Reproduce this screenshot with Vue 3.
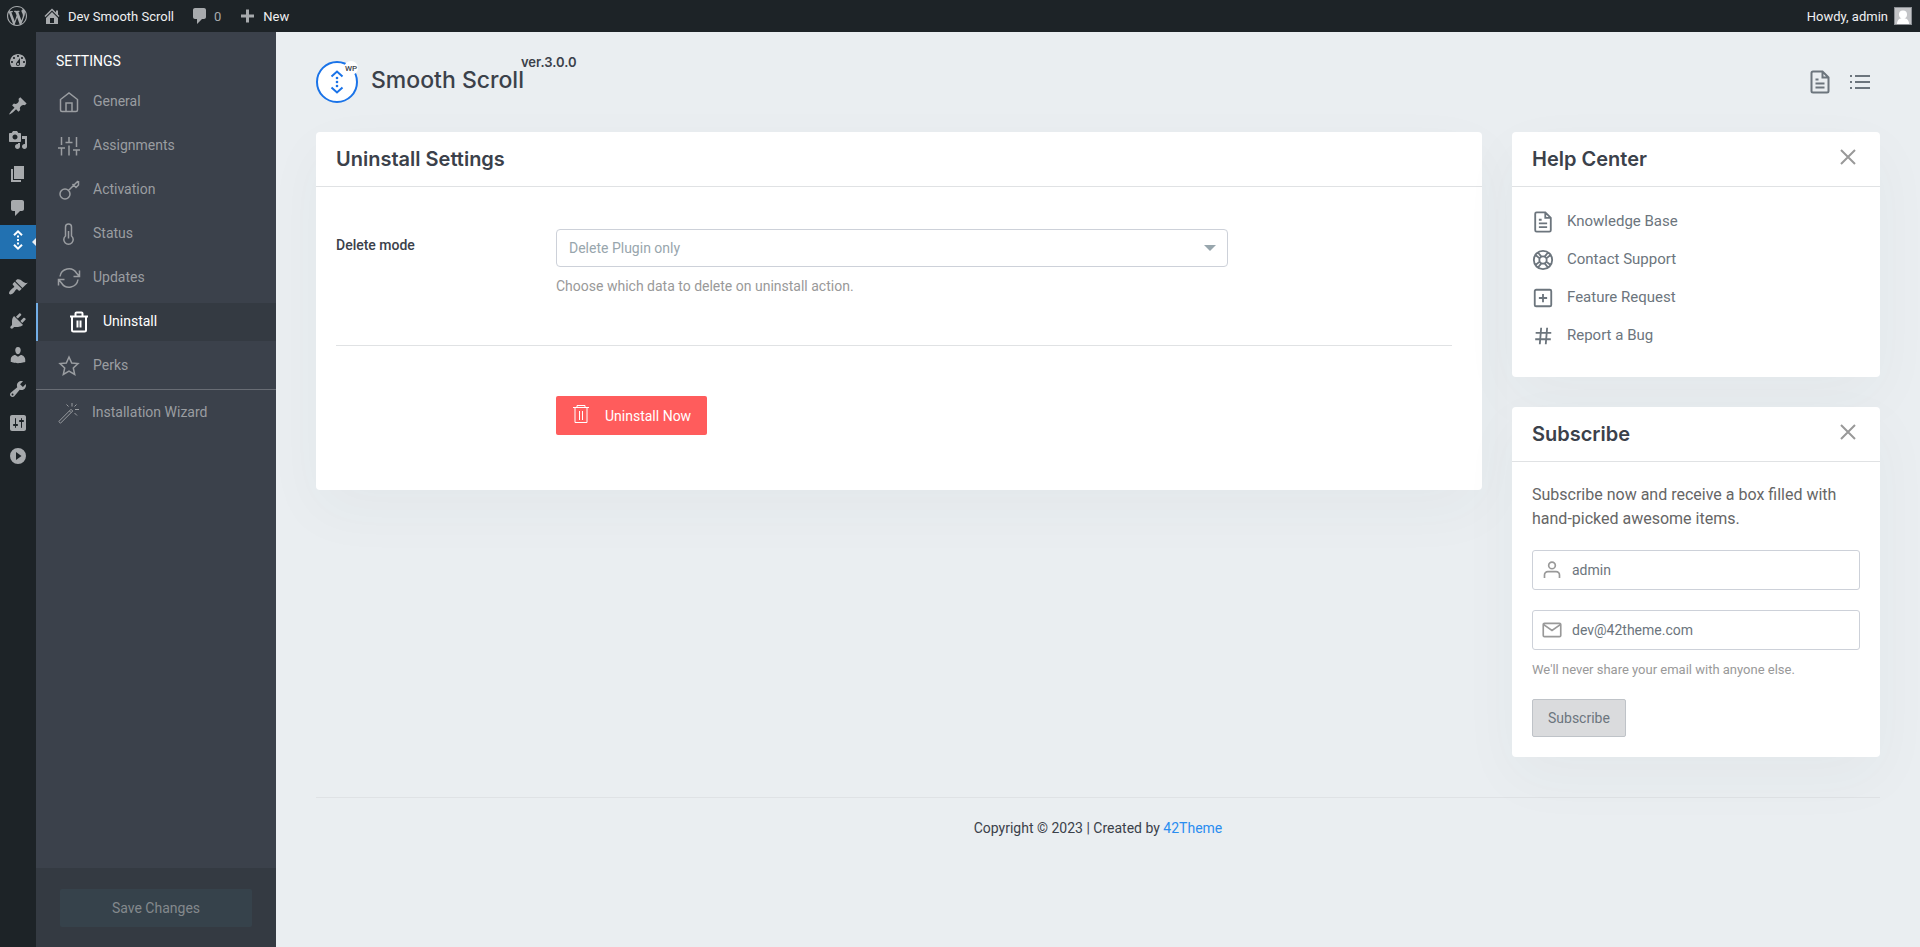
<!--
  Smooth Scroll plugin settings page
  Admin bar, WP menu, settings tabs, uninstall form, help and subscribe boxes
-->
<template>
  <div class="admin">
    <!-- Admin bar -->
    <header class="admin-bar">
      <a href="#" class="bar-item bar-logo" aria-label="About WordPress">
        <svg viewBox="0 0 20 20" width="20" height="20"><path :d="dash.wordpress" /></svg>
      </a>
      <a href="#" class="bar-item bar-site">
        <svg viewBox="0 0 20 20" width="20" height="20"><path :d="dash.home" /></svg>
        <span>Dev Smooth Scroll</span>
      </a>
      <a href="#" class="bar-item bar-comments">
        <svg viewBox="0 0 20 20" width="20" height="20"><path :d="dash.comments" /></svg>
        <span>0</span>
      </a>
      <a href="#" class="bar-item bar-new">
        <svg viewBox="0 0 20 20" width="20" height="20"><path :d="dash.plus" /></svg>
        <span>New</span>
      </a>
      <a href="#" class="bar-item bar-user">
        <span>Howdy, admin</span>
        <svg class="avatar" viewBox="0 0 18 18" width="18" height="18">
          <rect x="0.5" y="0.5" width="17" height="17" fill="#c3c4c7" stroke="#8c8f94" />
          <circle cx="9" cy="7.5" r="4" fill="#fff" />
          <path d="M3 17c0-4 2.500-6 6-6s6 2 6 6z" fill="#fff" />
        </svg>
      </a>
    </header>

    <div class="admin-body">
      <!-- WP menu -->
      <nav class="wp-menu" aria-label="Main menu">
        <a
          v-for="item in wpMenu"
          :key="item.icon"
          href="#"
          class="wp-item"
          :class="{ current: item.current, spaced: item.spaced }"
          :aria-label="item.label"
        >
          <svg viewBox="0 0 20 20" width="20" height="20"><path :d="dash[item.icon]" fill-rule="evenodd" /></svg>
        </a>
      </nav>

      <!-- Settings tabs -->
      <aside class="tabs">
        <h2 class="tabs-title">SETTINGS</h2>
        <ul class="tab-list">
          <li v-for="item in tabs" :key="item.id">
            <a href="#" class="tab" :class="{ active: tab === item.id }" @click.prevent="tab = item.id">
              <svg class="line-icon" viewBox="0 0 24 24" width="24" height="24"><path :d="line[item.id]" /></svg>
              <span>{{ item.name }}</span>
            </a>
          </li>
        </ul>
        <a href="#" class="tab wizard">
          <svg class="line-icon" viewBox="0 0 24 24" width="24" height="24"><path :d="line.wizard" /></svg>
          <span>Installation Wizard</span>
        </a>
        <div class="save-box">
          <button type="button" class="btn-save">Save Changes</button>
        </div>
      </aside>

      <!-- Content -->
      <main class="content">
        <div class="page-head">
          <svg class="logo" viewBox="0 0 42 42" width="42" height="42">
            <circle cx="21" cy="21" r="20" fill="#fff" stroke="#1a73e8" stroke-width="2" />
            <path d="M15.500 15.500l5.500-5 5.500 5M15.500 26.500l5.500 5 5.500-5" fill="none" stroke="#1a73e8" stroke-width="2" />
            <circle cx="21" cy="17" r="1.300" fill="#1a73e8" />
            <circle cx="21" cy="21" r="1.300" fill="#1a73e8" />
            <circle cx="21" cy="25" r="1.300" fill="#1a73e8" />
            <circle cx="35" cy="7" r="7" fill="#fff" />
            <text x="35" y="10" class="logo-text">WP</text>
          </svg>
          <h1 class="page-title">Smooth Scroll<sup>ver.3.0.0</sup></h1>
          <div class="head-links">
            <a href="#" aria-label="Documentation">
              <svg class="line-icon" viewBox="0 0 24 24" width="24" height="24"><path :d="line.doc" /></svg>
            </a>
            <a href="#" aria-label="Changelog">
              <svg class="line-icon" viewBox="0 0 24 24" width="24" height="24"><path :d="line.list" /></svg>
            </a>
          </div>
        </div>

        <div class="columns">
          <section class="card">
            <h3 class="card-head">Uninstall Settings</h3>
            <form class="form" @submit.prevent>
              <div class="form-row">
                <label for="delete-mode" class="form-label">Delete mode</label>
                <div class="form-field">
                  <div class="select-box">
                    <select id="delete-mode" v-model="deleteMode">
                      <option value="plugin">Delete Plugin only</option>
                      <option value="settings">Delete Plugin and settings</option>
                      <option value="all">Delete Plugin, settings and data</option>
                    </select>
                    <span class="caret"></span>
                  </div>
                  <p class="hint">Choose which data to delete on uninstall action.</p>
                </div>
              </div>
              <hr class="line" />
              <div class="form-action">
                <button type="button" class="btn-danger">
                  <svg class="trash" viewBox="0 0 18 20" width="18" height="20">
                    <path d="M1 3.500h16M5 3.500v-2h8v2M3 3.500v15h12v-15M7.500 7v9M10.500 7v9" />
                  </svg>
                  <span>Uninstall Now</span>
                </button>
              </div>
            </form>
          </section>

          <div class="side">
            <section class="card">
              <h3 class="card-head">
                <span>Help Center</span>
                <button type="button" class="close" aria-label="Close">
                  <svg viewBox="0 0 16 16" width="16" height="16"><path d="M1 1l14 14M15 1L1 15" /></svg>
                </button>
              </h3>
              <ul class="help-list">
                <li v-for="item in helpLinks" :key="item.icon">
                  <a href="#">
                    <svg class="line-icon" viewBox="0 0 24 24" width="22" height="22"><path :d="line[item.icon]" /></svg>
                    <span>{{ item.name }}</span>
                  </a>
                </li>
              </ul>
            </section>

            <section class="card">
              <h3 class="card-head">
                <span>Subscribe</span>
                <button type="button" class="close" aria-label="Close">
                  <svg viewBox="0 0 16 16" width="16" height="16"><path d="M1 1l14 14M15 1L1 15" /></svg>
                </button>
              </h3>
              <form class="subscribe" @submit.prevent>
                <p class="lead">Subscribe now and receive a box filled with hand-picked awesome items.</p>
                <label class="input-box">
                  <svg class="line-icon" viewBox="0 0 24 24" width="20" height="20"><path :d="line.user" /></svg>
                  <input v-model="userName" type="text" aria-label="Name" />
                </label>
                <label class="input-box">
                  <svg class="line-icon" viewBox="0 0 24 24" width="20" height="20"><path :d="line.mail" /></svg>
                  <input v-model="userMail" type="email" aria-label="Email" />
                </label>
                <p class="note">We'll never share your email with anyone else.</p>
                <button type="submit" class="btn-subscribe">Subscribe</button>
              </form>
            </section>
          </div>
        </div>

        <footer class="footer">Copyright © 2023 | Created by <a href="#">42Theme</a></footer>
      </main>
    </div>
  </div>
</template>

<script setup>
import { ref } from 'vue'

const tab = ref('uninstall')
const deleteMode = ref('plugin')
const userName = ref('admin')
const userMail = ref('dev@42theme.com')

const wpMenu = [
  { icon: 'dashboard', label: 'Dashboard' },
  { icon: 'post', label: 'Posts', spaced: true },
  { icon: 'media', label: 'Media' },
  { icon: 'page', label: 'Pages' },
  { icon: 'comments', label: 'Comments' },
  { icon: 'scroll', label: 'Smooth Scroll', current: true },
  { icon: 'appearance', label: 'Appearance', spaced: true },
  { icon: 'plugins', label: 'Plugins' },
  { icon: 'users', label: 'Users' },
  { icon: 'tools', label: 'Tools' },
  { icon: 'settings', label: 'Settings' },
  { icon: 'collapse', label: 'Collapse menu' },
]

const tabs = [
  { id: 'general', name: 'General' },
  { id: 'assignments', name: 'Assignments' },
  { id: 'activation', name: 'Activation' },
  { id: 'status', name: 'Status' },
  { id: 'updates', name: 'Updates' },
  { id: 'uninstall', name: 'Uninstall' },
  { id: 'perks', name: 'Perks' },
]

const helpLinks = [
  { icon: 'doc', name: 'Knowledge Base' },
  { icon: 'support', name: 'Contact Support' },
  { icon: 'feature', name: 'Feature Request' },
  { icon: 'bug', name: 'Report a Bug' },
]

// Filled icons, 20x20
const dash = {
  wordpress: 'M20 10c0-5.510-4.490-10-10-10C4.480 0 0 4.490 0 10c0 5.520 4.480 10 10 10 5.510 0 10-4.480 10-10zM7.780 15.370L4.370 6.220c.55-.02 1.170-.08 1.170-.08.5-.06.44-1.130-.06-1.110 0 0-1.450.11-2.370.11-.18 0-.37 0-.58-.01C4.120 2.690 6.870 1.110 10 1.110c2.330 0 4.450.87 6.050 2.340-.68-.11-1.650.39-1.650 1.580 0 .74.45 1.360.9 2.100.35.61.55 1.360.55 2.460 0 1.490-1.400 5-1.400 5l-3.030-8.370c.54-.02.82-.17.82-.17.5-.05.44-1.250-.06-1.220 0 0-1.440.12-2.380.12-.87 0-2.330-.12-2.330-.12-.5-.03-.56 1.200-.06 1.220l.92.08 1.260 3.410zM17.410 10c.24-.64.74-1.870.43-4.250.7 1.290 1.050 2.710 1.050 4.250 0 3.290-1.730 6.240-4.400 7.780.97-2.590 1.940-5.200 2.920-7.780zM6.100 18.090C3.120 16.650 1.110 13.530 1.110 10c0-1.300.23-2.480.72-3.590C3.250 10.300 4.670 14.200 6.100 18.090zm4.030-6.630l2.580 6.980c-.86.29-1.760.45-2.710.45-.79 0-1.570-.11-2.290-.33.81-2.380 1.620-4.740 2.420-7.100z',
  home: 'M16 8.500l1.530 1.530-1.060 1.060L10 4.600l-6.470 6.490-1.060-1.060L10 2.500l4 4v-2h2v4zm-6-2.460l6 5.990V18H4v-5.970zM12 17v-5H8v5h4z',
  plus: 'M17 8.500v3h-5v5H9v-5H4v-3h5v-5h3v5h5z',
  dashboard: 'M3.760 16h12.480c1.100-1.370 1.760-3.110 1.760-5 0-4.420-3.580-8-8-8s-8 3.580-8 8c0 1.890.66 3.630 1.760 5zM10 4c.55 0 1 .45 1 1s-.45 1-1 1-1-.45-1-1 .45-1 1-1zM6 6c.55 0 1 .45 1 1s-.45 1-1 1-1-.45-1-1 .45-1 1-1zm8 0c.55 0 1 .45 1 1s-.45 1-1 1-1-.45-1-1 .45-1 1-1zm-5.370 5.550L12 7v6c0 1.100-.9 2-2 2s-2-.9-2-2c0-.57.24-1.080.63-1.450zM4 10c.55 0 1 .45 1 1s-.45 1-1 1-1-.45-1-1 .45-1 1-1zm12 0c.55 0 1 .45 1 1s-.45 1-1 1-1-.45-1-1 .45-1 1-1zm-5 3c0-.55-.45-1-1-1s-1 .45-1 1 .45 1 1 1 1-.45 1-1z',
  post: 'M10.440 3.020l1.820-1.820 6.360 6.350-1.830 1.820c-1.050-.68-2.480-.57-3.410.36l-.75.75c-.92.93-1.040 2.350-.35 3.410l-1.830 1.820-2.410-2.410-2.800 2.790c-.42.42-3.380 2.710-3.800 2.290s1.860-3.390 2.280-3.810l2.790-2.790L4.100 9.360l1.830-1.820c1.050.69 2.480.57 3.400-.36l.75-.75c.93-.92 1.050-2.350.36-3.410z',
  media: 'M13 11V4c0-.55-.45-1-1-1h-1.670L9 1H5L3.670 3H2c-.55 0-1 .45-1 1v7c0 .55.45 1 1 1h10c.55 0 1-.45 1-1zM7 4.500c1.380 0 2.500 1.120 2.500 2.500S8.380 9.500 7 9.500 4.500 8.380 4.500 7 5.620 4.500 7 4.500zM14 6h5v10.500c0 1.380-1.120 2.500-2.500 2.500S14 17.880 14 16.500s1.120-2.500 2.500-2.500c.17 0 .34.02.5.05V9h-3V6zm-4 8.050V13h2v3.500c0 1.380-1.120 2.500-2.500 2.500S7 17.880 7 16.500 8.120 14 9.500 14c.17 0 .34.02.5.05z',
  page: 'M6 15V2h10v13H6zm-1 1h8v2H3V5h2v11z',
  comments: 'M5 2h9c1.100 0 2 .9 2 2v7c0 1.100-.9 2-2 2h-2l-5 5v-5H5c-1.100 0-2-.9-2-2V4c0-1.100.9-2 2-2z',
  scroll: 'M10 -2l4.700 4.500-1.400 1.400L10 .7 6.700 3.900 5.300 2.500zM10 18l4.700-4.500-1.400-1.400-3.300 3.200-3.300-3.200-1.400 1.400zM9 3.500h2v2H9zM9 7h2v2H9zM9 10.500h2v2H9z',
  appearance: 'M14.480 11.060L7.410 3.990l1.500-1.500c.5-.56 2.300-.47 3.510.32 1.210.8 1.430 1.280 2.910 2.100 1.180.64 2.450 1.260 4.450.85zm-.71.71L6.700 4.700 4.930 6.470c-.39.39-.39 1.020 0 1.410l1.060 1.060c.39.39.39 1.030 0 1.420-.6.6-1.430 1.110-2.210 1.690-.35.26-.7.53-1.010.84C1.430 14.230.4 16.080 1.400 17.070c.99 1 2.840-.03 4.180-1.360.31-.31.58-.66.85-1.020.57-.78 1.080-1.610 1.690-2.210.39-.39 1.020-.39 1.410 0l1.060 1.060c.39.39 1.020.39 1.410 0z',
  plugins: 'M13.110 4.360L9.870 7.600 8 5.730l3.240-3.240c.35-.34 1.050-.2 1.560.32.52.51.66 1.210.31 1.550zm-8 1.770l.91-1.120 9.010 9.010-1.190.84c-.71.71-2.630 1.160-3.820 1.160H6.140L4.900 17.260c-.59.59-1.540.59-2.120 0-.59-.58-.59-1.530 0-2.120l1.240-1.240v-3.880c0-1.130.4-3.190 1.090-3.890zm7.260 3.970l3.240-3.240c.34-.35 1.040-.21 1.550.31.52.51.66 1.210.31 1.550l-3.240 3.250z',
  users: 'M10 9.250c-2.270 0-2.730-3.440-2.730-3.440C7 4.020 7.820 2 9.970 2c2.160 0 2.980 2.020 2.710 3.810 0 0-.41 3.440-2.680 3.440zm0 2.570L12.720 10c2.390 0 4.520 2.330 4.520 4.530v2.490s-3.650 1.130-7.240 1.130c-3.650 0-7.240-1.130-7.240-1.130v-2.490c0-2.250 1.940-4.480 4.470-4.480z',
  tools: 'M16.680 9.770c-1.340 1.340-3.300 1.670-4.950.99l-5.410 6.520c-.99.99-2.590.99-3.580 0s-.99-2.590 0-3.570l6.520-5.420c-.68-1.650-.35-3.610.99-4.950 1.280-1.280 3.120-1.620 4.720-1.060l-2.890 2.890 2.820 2.820 2.860-2.870c.53 1.580.18 3.390-1.080 4.650zM3.810 16.210c.4.39 1.040.39 1.430 0 .4-.4.4-1.040 0-1.430-.39-.4-1.030-.4-1.430 0-.39.39-.39 1.030 0 1.430z',
  settings: 'M18 16V4c0-1.100-.9-2-2-2H4c-1.100 0-2 .9-2 2v12c0 1.100.9 2 2 2h12c1.100 0 2-.9 2-2zM8 11h1c.55 0 1 .45 1 1s-.45 1-1 1H8v1.500c0 .28-.22.5-.5.5s-.5-.22-.5-.5V13H6c-.55 0-1-.45-1-1s.45-1 1-1h1V5.500c0-.28.22-.5.5-.5s.5.22.5.5V11zm5-2h-1c-.55 0-1-.45-1-1s.45-1 1-1h1V5.500c0-.28.22-.5.5-.5s.5.22.5.5V7h1c.55 0 1 .45 1 1s-.45 1-1 1h-1v5.500c0 .28-.22.5-.5.5s-.5-.22-.5-.5V9z',
  collapse: 'M10 1a8 8 0 1 0 0 16 8 8 0 0 0 0-16zM8 5l5.500 4L8 13z',
}

// Outline icons, 24x24
const line = {
  general: 'M3.500 9.500L12 3l8.500 6.500V20a1.500 1.500 0 0 1-1.500 1.500H5A1.500 1.500 0 0 1 3.500 20zM9 21.500V13h6v8.500',
  assignments: 'M4.500 3v8M4.500 14v7.500M1 14h7M12 3v5M12 11.500v10M8.500 8.500h7M19.500 3v10M19.500 16v5.500M16 16h7',
  activation: 'M13 16a5 5 0 1 1-10 0 5 5 0 0 1 10 0zM11.500 12.500l9.500-9.500M21.500 3v4l-2.500 2.500-3.500-3.500',
  status: 'M8.500 5a3 3 0 0 1 6 0v9a4.700 4.700 0 1 1-6 0zM11.500 9v7.500',
  updates: 'M3 10.500a9 9 0 0 1 16.500-3.500l2.500 3M22.500 4.500V10.500h-6M21 13.500a9 9 0 0 1-16.500 3.500l-2.500-3M1.500 19.500V13.500h6',
  uninstall: 'M3 6.500h18M8.500 6V3.500a1 1 0 0 1 1-1h5a1 1 0 0 1 1 1V6M5 6.500V20a1.500 1.500 0 0 0 1.500 1.500h11A1.500 1.500 0 0 0 19 20V6.500M10.500 10.500v7M13.500 10.500v7',
  perks: 'M12 3l2.700 6 6.300.6-4.700 4.300 1.400 6.600-5.700-3.300-5.700 3.300 1.400-6.600L3 9.600 9.300 9z',
  wizard: 'M1.800 20.500L14 8.300l1.700 1.700L3.500 22.200zM12.500 10l1.500 1.500M15 2v3.500M19.500 3.500l-2 2M9.500 3.500l2 2M18 8.500h4M17.500 12l2.500 2.500',
  doc: 'M14.500 1.500H5A1.500 1.500 0 0 0 3.500 3v18A1.500 1.500 0 0 0 5 22.500h14a1.500 1.500 0 0 0 1.500-1.500V7.500zM14.500 1.500v6h6M7.500 9.500h3M7.500 13.500h9M7.500 17.500h9',
  list: 'M7 6h15M7 12h15M7 18h15M2 6h2M2 12h2M2 18h2',
  support: 'M22 12a10 10 0 1 1-20 0 10 10 0 0 1 20 0zM16 12a4 4 0 1 1-8 0 4 4 0 0 1 8 0zM6.500 3.800L10 8M3.800 6.500L8 10M17.500 3.800L14 8M20.200 6.500L16 10M6.500 20.200L10 16M3.800 17.500L8 14M17.500 20.200L14 16M20.200 17.500L16 14',
  feature: 'M4.500 3h15A1.500 1.500 0 0 1 21 4.500v15a1.500 1.500 0 0 1-1.500 1.500h-15A1.500 1.500 0 0 1 3 19.500v-15A1.500 1.500 0 0 1 4.500 3zM12 7.500v9M7.500 12h9',
  bug: 'M10 3L8.500 21M16.500 3L15 21M4 8.500h17M3.500 15.500h17',
  user: 'M16 6.500a4 4 0 1 1-8 0 4 4 0 0 1 8 0zM3 21.500V18a4 4 0 0 1 4-4h10a4 4 0 0 1 4 4v3.500',
  mail: 'M3 4h18a1.500 1.500 0 0 1 1.500 1.500v13A1.500 1.500 0 0 1 21 20H3a1.500 1.500 0 0 1-1.500-1.500v-13A1.500 1.500 0 0 1 3 4zM2 5.500l10 7L22 5.500',
}
</script>

<style>
body { margin: 0; background: #eaeef1; }
</style>

<style scoped>
.admin { display: flex; flex-direction: column; min-height: 100vh; font-family: Roboto, "Liberation Sans", sans-serif; font-size: 14px; color: #3b414a; }
a { text-decoration: none; color: inherit; }
ul { list-style: none; margin: 0; padding: 0; }
h1, h2, h3, p { margin: 0; }
svg { display: block; flex: none; overflow: visible; }
button, input, select { font-family: inherit; font-size: 14px; }
.line-icon { fill: none; stroke: currentColor; stroke-width: 2; }

/* Admin bar */
.admin-bar { display: flex; height: 32px; background: #1d2327; color: #f0f0f1; font-size: 13px; }
.bar-item { display: flex; align-items: center; gap: 6px; padding: 0 8px; }
.bar-item svg { fill: #a7aaad; }
.bar-logo { padding: 0 7px; }
.bar-comments { gap: 4px; color: #a7aaad; }
.bar-user { margin-left: auto; }

.admin-body { display: flex; flex: 1; }

/* WP menu */
.wp-menu { width: 36px; padding-top: 12px; background: #1d2327; flex: none; }
.wp-item { display: flex; align-items: center; justify-content: center; height: 34px; position: relative; }
.wp-item.spaced { margin-top: 11px; }
.wp-item svg { fill: #a7aaad; }
.wp-item.current { background: #2271b1; }
.wp-item.current svg { fill: #fff; }
.wp-item.current::after { content: ''; position: absolute; right: 0; top: 13px; border: 4px solid transparent; border-left: 0; border-right-color: #eaeef1; }

/* Settings tabs */
.tabs { width: 240px; flex: none; display: flex; flex-direction: column; background: #3b414b; color: #9a9da1; }
.tabs-title { padding: 19px 20px 12px; font-size: 14px; line-height: 20px; font-weight: 400; color: #fff; }
.tab-list { display: flex; flex-direction: column; gap: 6px; margin-bottom: 4px; }
.tab { display: flex; align-items: center; gap: 12px; height: 38px; padding-left: 21px; box-sizing: border-box; }
.tab span { padding-bottom: 2px; }
.tab .line-icon { stroke-width: 1.5; }
.tab.active { padding-left: 29px; border-left: 2px solid #72aee6; background: #343a42; color: #fff; }
.tab.active .line-icon { stroke-width: 2; }
.tab.wizard { gap: 11px; height: 47px; border-top: 1px solid #686c74; }
.tab.wizard .line-icon { stroke-width: 1; }
.save-box { margin-top: auto; padding: 21px 24px 20px; background: #343a42; }
.btn-save { display: block; width: 100%; height: 38px; border: 0; border-radius: 2px; background: #36424b; color: #84898d; }

/* Page head */
.content { flex: 1; min-width: 0; padding: 29px 40px 40px; }
.page-head { display: flex; align-items: center; height: 42px; margin-bottom: 29px; }
.logo-text { font-size: 8px; font-weight: 500; text-anchor: middle; fill: #3b414a; }
.page-title { display: flex; margin-left: 13px; padding-bottom: 4px; font-family: Inter, sans-serif; font-size: 23px; line-height: 32px; font-weight: 500; }
.page-title sup { margin-top: -10px; margin-left: -3px; font-size: 13px; line-height: 16px; font-weight: 600; }
.head-links { display: flex; gap: 16px; margin-left: auto; padding-right: 8px; color: #6c757d; }

/* Cards */
.columns { display: grid; grid-template-columns: minmax(0, 1fr) 368px; gap: 30px; align-items: start; }
.side { display: grid; gap: 30px; }
.card { background: #fff; border-radius: 4px; box-shadow: 0 20px 60px rgba(59, 65, 74, 0.04); }
.card-head { display: flex; align-items: center; justify-content: space-between; height: 54px; padding: 0 20px; border-bottom: 1px solid #e0e2e4; font-family: Inter, sans-serif; font-size: 20px; font-weight: 600; }
.close { padding: 4px; margin-bottom: 4px; border: 0; background: none; }
.close path { stroke: #999; stroke-width: 2; }

/* Uninstall form */
.form { padding: 42px 30px 55px 20px; }
.form-row { display: grid; grid-template-columns: 220px 1fr; }
.form-label { padding-top: 6px; line-height: 20px; font-weight: 500; }
.select-box { position: relative; width: 75%; }
.select-box select { display: block; width: 100%; height: 38px; padding: 0 12px; border: 1px solid #cdd1d9; border-radius: 4px; background: #fff; color: #98a6ad; appearance: none; }
.caret { position: absolute; right: 12px; top: 16px; border: 6px solid transparent; border-bottom: 0; border-top-color: #98a6ad; pointer-events: none; }
.hint { margin-top: 9px; line-height: 20px; color: #999; }
.line { height: 1px; margin: 49px 0 50px; border: 0; background: #e0e2e4; }
.form-action { padding-left: 220px; }
.btn-danger { display: flex; align-items: center; gap: 15px; height: 39px; padding: 0 16px; border: 0; border-radius: 2px; background: #ff5c5c; color: #fff; }
.trash { fill: none; stroke: #fff; margin-bottom: 4px; }

/* Help center */
.help-list { padding: 16px 20px 22px; font-size: 15px; color: #6c757d; }
.help-list a { display: flex; align-items: center; gap: 13px; height: 38px; }
.help-list span { padding-bottom: 2px; }

/* Subscribe */
.subscribe { padding: 21px 20px 20px; }
.lead { margin-bottom: 19px; font-size: 16px; line-height: 24px; color: #666; }
.input-box { display: flex; align-items: center; gap: 10px; height: 38px; margin-bottom: 20px; padding: 0 9px; border: 1px solid #cdd1d9; border-radius: 3px; color: #999; }
.input-box input { flex: 1; min-width: 0; padding: 0; border: 0; outline: 0; background: none; color: #6c757d; }
.note { margin-top: -10px; margin-bottom: 19px; font-size: 13px; line-height: 20px; color: #999; }
.btn-subscribe { height: 38px; padding: 0 15px; border: 1px solid #bfc3c8; border-radius: 2px; background: #dadbdd; color: #6c757d; }

/* Footer */
.footer { margin-top: 40px; padding-top: 20px; border-top: 1px solid #dfe2e5; text-align: center; line-height: 20px; }
.footer a { color: #2a8df0; }
</style>
